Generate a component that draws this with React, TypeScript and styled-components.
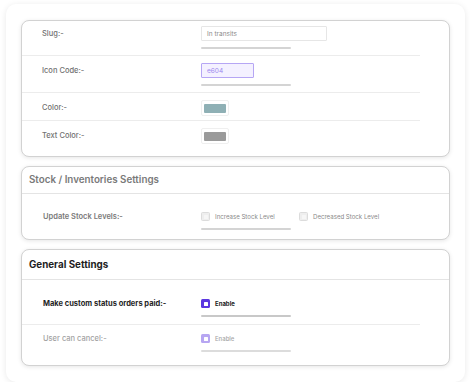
import React from "react";
import styled, { createGlobalStyle } from "styled-components";

const Global = createGlobalStyle`
  html, body { margin: 0; padding: 0; background: #ffffff; }
  body { font-family: Inter, "Noto Sans", Arial, sans-serif; }
  * { box-sizing: border-box; }
`;

const Outer = styled.div`
  margin: 4px 0 0 6px;
  width: 459px;
  height: 378px;
  background: #fff;
  border-radius: 10px;
  box-shadow: 0 1px 6px rgba(0, 0, 0, 0.09);
  padding: 16px 15px 0 15px;
  display: flex;
  flex-direction: column;
  gap: 9px;
`;

const Panel = styled.section<{ $h: number }>`
  height: ${(p) => p.$h}px;
  border: 1px solid #d2d2d2;
  border-radius: 8px;
  box-shadow: 0 1px 4px rgba(0, 0, 0, 0.1);
  background: #fff;
  display: flex;
  flex-direction: column;
`;

const Header = styled.div<{ $h: number; $dark?: boolean }>`
  height: ${(p) => p.$h}px;
  display: flex;
  align-items: center;
  padding: 0 7px 1px;
  border-bottom: 1px solid #e4e4e4;
  font-size: 9.8px;
  font-weight: ${(p) => (p.$dark ? 700 : 600)};
  color: ${(p) => (p.$dark ? "#1e1e1e" : "#7a7a7a")};
`;

const Row = styled.div<{ $h: number; $pt: number; $divider?: boolean }>`
  height: ${(p) => p.$h}px;
  margin-right: 29px;
  padding: ${(p) => p.$pt}px 0 0 20px;
  display: grid;
  grid-template-columns: 159px 1fr;
  align-items: start;
  border-bottom: ${(p) => (p.$divider ? "1px solid #ececec" : "none")};
`;

const Label = styled.div<{ $tone?: "normal" | "strong" | "muted" | "soft"; $lh: number }>`
  font-size: 7.5px;
  line-height: ${(p) => p.$lh}px;
  white-space: nowrap;
  font-weight: ${(p) => (p.$tone === "strong" ? 700 : p.$tone === "soft" ? 600 : 500)};
  color: ${(p) =>
    p.$tone === "strong"
      ? "#1e1e1e"
      : p.$tone === "muted"
      ? "#a2a2a2"
      : p.$tone === "soft"
      ? "#7a7a7a"
      : "#727272"};
  padding-left: ${(p) => (p.$tone === "normal" ? 0 : 1)}px;
`;

const Control = styled.div`
  display: flex;
  flex-direction: column;
  align-items: flex-start;
`;

const TextInput = styled.div<{ $w: number; $active?: boolean }>`
  width: ${(p) => p.$w}px;
  height: 15px;
  border: 1px solid ${(p) => (p.$active ? "#b6a6f4" : "#e6e6e6")};
  background: ${(p) => (p.$active ? "#f4f1ff" : "#fff")};
  color: ${(p) => (p.$active ? "#9c88ee" : "#8a8a8a")};
  border-radius: 1px;
  font-size: 6.5px;
  display: flex;
  align-items: center;
  padding-left: 5px;
`;

const Underline = styled.div<{ $top: number; $color?: string }>`
  width: 90px;
  height: 2px;
  margin-top: ${(p) => p.$top}px;
  background: ${(p) => p.$color || "#d4d4d4"};
  border-radius: 1px;
`;

const SwatchBox = styled.div`
  width: 28px;
  height: 16px;
  border: 1px solid #efefef;
  border-radius: 2px;
  display: flex;
  align-items: center;
  justify-content: center;
`;

const Swatch = styled.div<{ $c: string }>`
  width: 22px;
  height: 9px;
  border-radius: 1px;
  background: ${(p) => p.$c};
`;

const Options = styled.div`
  display: flex;
  align-items: center;
`;

const Option = styled.label<{ $w?: number }>`
  display: flex;
  align-items: center;
  gap: 5px;
  width: ${(p) => (p.$w ? `${p.$w}px` : "auto")};
  font-size: 6.1px;
  color: #8a8a8a;
  white-space: nowrap;
`;

const Check = styled.span<{ $state: "off" | "on" | "light" }>`
  width: 9px;
  height: 9px;
  border-radius: 1.5px;
  display: flex;
  align-items: center;
  justify-content: center;
  background: ${(p) =>
    p.$state === "on" ? "#5b37e0" : p.$state === "light" ? "#b7a6f2" : "#eeeeee"};
  border: 1px solid ${(p) => (p.$state === "off" ? "#dcdcdc" : "transparent")};
  &::after {
    content: "";
    width: 4px;
    height: 4px;
    background: ${(p) => (p.$state === "off" ? "#f6f6f6" : "#fff")};
    border-radius: 0.5px;
  }
`;

const EnableText = styled.span<{ $strong?: boolean }>`
  font-size: 6px;
  font-weight: ${(p) => (p.$strong ? 700 : 500)};
  color: ${(p) => (p.$strong ? "#222" : "#a6a6a6")};
`;

export default function App() {
  return (
    <>
      <Global />
      <Outer>
        <Panel $h={137}>
          <Row $h={35} $pt={5} $divider>
            <Label $tone="normal" $lh={15}>Slug:-</Label>
            <Control>
              <TextInput $w={126}>In transits</TextInput>
              <Underline $top={6} />
            </Control>
          </Row>
          <Row $h={37} $pt={7} $divider>
            <Label $tone="normal" $lh={15}>Icon Code:-</Label>
            <Control>
              <TextInput $w={53} $active>e604</TextInput>
              <Underline $top={6} />
            </Control>
          </Row>
          <Row $h={28} $pt={7} $divider>
            <Label $tone="normal" $lh={16}>Color:-</Label>
            <Control>
              <SwatchBox>
                <Swatch $c="#8fb0b5" />
              </SwatchBox>
            </Control>
          </Row>
          <Row $h={35} $pt={7}>
            <Label $tone="normal" $lh={16}>Text Color:-</Label>
            <Control>
              <SwatchBox>
                <Swatch $c="#9a9a9a" />
              </SwatchBox>
            </Control>
          </Row>
        </Panel>

        <Panel $h={74}>
          <Header $h={27}>Stock / Inventories Settings</Header>
          <Row $h={45} $pt={18}>
            <Label $tone="soft" $lh={9}>Update Stock Levels:-</Label>
            <Control>
              <Options>
                <Option $w={98}>
                  <Check $state="off" />
                  Increase Stock Level
                </Option>
                <Option>
                  <Check $state="off" />
                  Decreased Stock Level
                </Option>
              </Options>
              <Underline $top={7} />
            </Control>
          </Row>
        </Panel>

        <Panel $h={117}>
          <Header $h={30} $dark>General Settings</Header>
          <Row $h={45} $pt={19} $divider>
            <Label $tone="strong" $lh={9}>Make custom status orders paid:-</Label>
            <Control>
              <Option>
                <Check $state="on" />
                <EnableText $strong>Enable</EnableText>
              </Option>
              <Underline $top={7} $color="#c8c8c8" />
            </Control>
          </Row>
          <Row $h={40} $pt={9}>
            <Label $tone="muted" $lh={9}>User can cancel:-</Label>
            <Control>
              <Option>
                <Check $state="light" />
                <EnableText>Enable</EnableText>
              </Option>
              <Underline $top={7} $color="#dcdcdc" />
            </Control>
          </Row>
        </Panel>
      </Outer>
    </>
  );
}
